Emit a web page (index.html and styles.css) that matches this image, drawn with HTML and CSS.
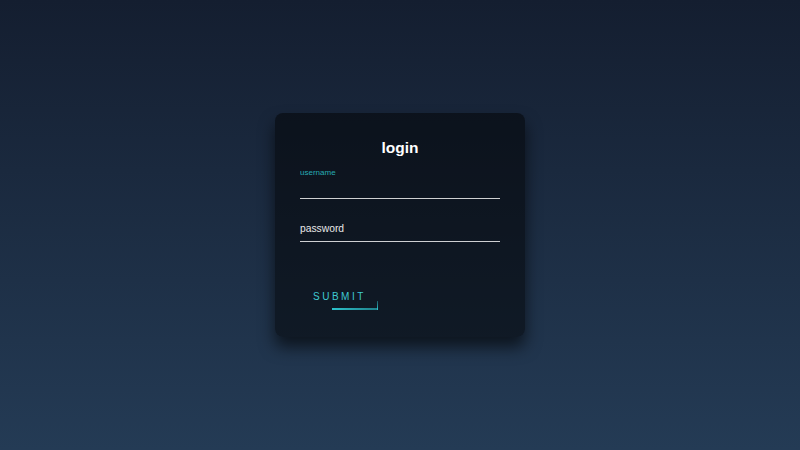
FILE: index.html
```html
<!DOCTYPE html>
<html lang="en">
<head>
  <meta charset="UTF-8" />
  <title>Login</title>
  <link rel="stylesheet" href="styles.css">
</head>
<body>
  <div class="login-box">
    <h2>login</h2>
    <form>
      <div class="user-box">
        <input type="text" name="username" required />
        <label class="raised">username</label>
      </div>
      <div class="user-box">
        <input type="password" name="password" required />
        <label>password</label>
      </div>
      <a href="#" class="submit">
        <span class="edge-bottom"></span>
        <span class="edge-right"></span>
        Submit
      </a>
    </form>
  </div>
</body>
</html>
```

FILE: styles.css
```css
html {
  height: 100%;
}
body {
  margin: 0;
  min-height: 100vh;
  display: flex;
  align-items: center;
  justify-content: center;
  font-family: "Liberation Sans", Arial, sans-serif;
  background: linear-gradient(#141e30, #243b55);
}
.login-box {
  width: 250px;
  padding: 25px 25px 27px;
  box-sizing: border-box;
  background: rgba(0, 0, 0, .5);
  border-radius: 8px;
  box-shadow: 0 10px 16px rgba(0, 0, 0, .6);
}
.login-box h2 {
  margin: 0 0 16px;
  padding: 0;
  color: #fff;
  font-size: 15.5px;
  line-height: 20px;
  text-align: center;
}
.user-box {
  position: relative;
  margin-bottom: 18px;
}
.user-box input {
  display: block;
  width: 100%;
  padding: 6px 0;
  font-size: 10px;
  line-height: 12px;
  height: 25px;
  box-sizing: border-box;
  color: #fff;
  background: transparent;
  border: none;
  border-bottom: 1px solid rgba(255, 255, 255, .8);
  outline: none;
  font-family: inherit;
}
.user-box label {
  position: absolute;
  top: 0;
  left: 0;
  padding: 6px 0;
  font-size: 10.3px;
  line-height: 12px;
  color: #e8e8e8;
  pointer-events: none;
}
.user-box label.raised {
  top: -13px;
  font-size: 8px;
  color: #2cc3cc;
  opacity: .85;
}
.submit {
  position: relative;
  display: inline-block;
  margin-top: 25px;
  padding: 6px 12px 7px 13px;
  color: #3fc9d1;
  font-size: 10px;
  line-height: 12px;
  text-decoration: none;
  text-transform: uppercase;
  letter-spacing: 2.5px;
}
.submit span {
  position: absolute;
  display: block;
}
.edge-bottom {
  right: 0;
  bottom: 0;
  width: 46px;
  height: 2px;
  background: linear-gradient(270deg, rgba(44, 195, 204, .6), #2cc3cc);
}
.edge-right {
  right: 0;
  bottom: 0;
  width: 1px;
  height: 9px;
  background: linear-gradient(360deg, #2cc3cc, rgba(44, 195, 204, .4));
}
```
